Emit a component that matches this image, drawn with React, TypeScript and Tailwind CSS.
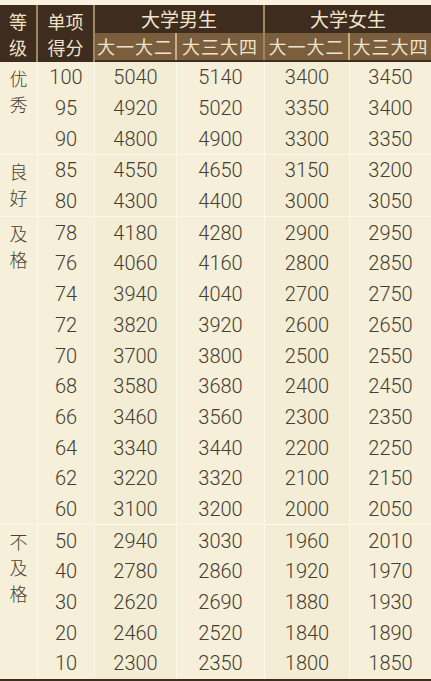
import React from "react";

const cjk = { fontFamily: '"Noto Sans CJK SC", "Noto Sans", sans-serif' };
const num = { fontFamily: 'Roboto, "Liberation Sans", Arial, sans-serif' };

type Row = [number, number, number, number, number];

const groups: { label: string; rows: Row[] }[] = [
  {
    label: "优秀",
    rows: [
      [100, 5040, 5140, 3400, 3450],
      [95, 4920, 5020, 3350, 3400],
      [90, 4800, 4900, 3300, 3350],
    ],
  },
  {
    label: "良好",
    rows: [
      [85, 4550, 4650, 3150, 3200],
      [80, 4300, 4400, 3000, 3050],
    ],
  },
  {
    label: "及格",
    rows: [
      [78, 4180, 4280, 2900, 2950],
      [76, 4060, 4160, 2800, 2850],
      [74, 3940, 4040, 2700, 2750],
      [72, 3820, 3920, 2600, 2650],
      [70, 3700, 3800, 2500, 2550],
      [68, 3580, 3680, 2400, 2450],
      [66, 3460, 3560, 2300, 2350],
      [64, 3340, 3440, 2200, 2250],
      [62, 3220, 3320, 2100, 2150],
      [60, 3100, 3200, 2000, 2050],
    ],
  },
  {
    label: "不及格",
    rows: [
      [50, 2940, 3030, 1960, 2010],
      [40, 2780, 2860, 1920, 1970],
      [30, 2620, 2690, 1880, 1930],
      [20, 2460, 2520, 1840, 1890],
      [10, 2300, 2350, 1800, 1850],
    ],
  },
];

const colBg = ["bg-[#f6efd9]", "bg-[#f4edd5]", "bg-[#f6efd9]", "bg-[#f4edd5]", "bg-[#f6efd9]"];

export default function App() {
  return (
    <div className="w-[431px] h-[681px] bg-[#f8f2df] pt-[5px] overflow-hidden flex flex-col">
      {/* header */}
      <div
        className="grid grid-cols-[38px_57px_82px_88px_85px_81px] grid-rows-[28px_29px] bg-[#3e2c1e] text-[#efe4cb]"
        style={cjk}
      >
        <div className="row-span-2 flex flex-col items-center justify-center text-[18px] leading-[26px] border-r-2 border-[#a08660]">
          <span>等</span>
          <span>级</span>
        </div>
        <div className="row-span-2 flex flex-col items-center justify-center text-[18px] leading-[26px] border-r-2 border-[#a08660]">
          <span>单项</span>
          <span>得分</span>
        </div>
        <div className="col-span-2 flex items-center justify-center text-[19px] border-r-2 border-[#a08660]">
          大学男生
        </div>
        <div className="col-span-2 flex items-center justify-center text-[19px]">大学女生</div>
        <div className="flex items-center justify-center text-[18px] tracking-[1px] bg-[#7a5e3d] border-r-2 border-[#c9ae80] mb-[2px]">
          大一大二
        </div>
        <div className="flex items-center justify-center text-[18px] tracking-[1px] bg-[#7a5e3d] border-r-2 border-[#a08660] mb-[2px]">
          大三大四
        </div>
        <div className="flex items-center justify-center text-[18px] tracking-[1px] bg-[#7a5e3d] border-r-2 border-[#c9ae80] mb-[2px]">
          大一大二
        </div>
        <div className="flex items-center justify-center text-[18px] tracking-[1px] bg-[#7a5e3d] mb-[2px]">
          大三大四
        </div>
      </div>

      {/* body */}
      <div className="flex flex-col">
        {groups.map((g, gi) => (
          <div key={gi} className={`flex ${gi > 0 ? "border-t border-[#fbf8ee]" : ""}`}>
            <div
              className="w-[38px] shrink-0 flex flex-col items-center pt-[3px] text-[18px] leading-[26px] text-[#4a4132] font-light bg-[#f6efd9] border-r border-[#fbf8ee]"
              style={cjk}
            >
              {g.label.split("").map((c, i) => (
                <span key={i}>{c}</span>
              ))}
            </div>
            <div className="flex flex-col">
              {g.rows.map((r, ri) => (
                <div
                  key={ri}
                  className="grid grid-cols-[57px_82px_88px_85px_81px] h-[30.7px] text-[20px] font-light text-[#463d2f]"
                  style={num}
                >
                  {r.map((v, ci) => (
                    <div
                      key={ci}
                      className={`flex items-center justify-center ${colBg[ci]} ${ci < 4 ? "border-r border-[#fbf8ee]" : ""}`}
                    >
                      {v}
                    </div>
                  ))}
                </div>
              ))}
            </div>
          </div>
        ))}
      </div>
      <div className="flex-1 bg-[#f8f2df]" />
      <div className="h-[4px] bg-[#3e2c1e]" />
    </div>
  );
}
